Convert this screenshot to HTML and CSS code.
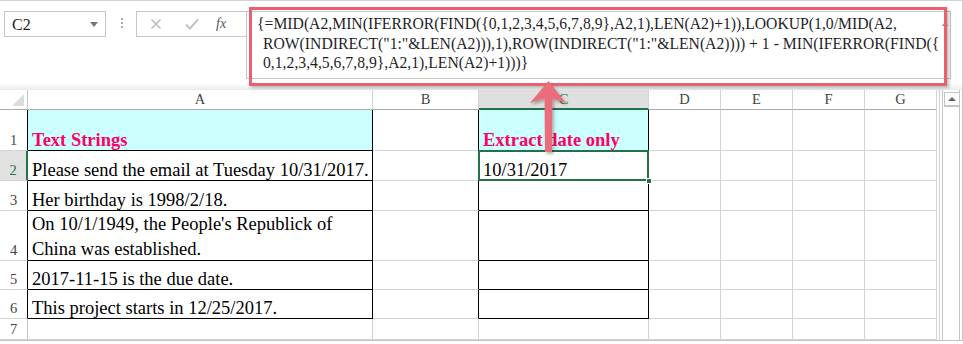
FILE: index.html
```html
<!DOCTYPE html>
<html lang="en">
<head>
    <meta charset="UTF-8">
    <meta name="viewport" content="width=device-width, initial-scale=1.0">
    <title>Extract date only</title>
    <link rel="stylesheet" href="styles.css">
</head>
<body>
<div class="app">
    <div class="topbar">
        <div class="namebox">
            <span class="name">C2</span>
            <span class="caret"></span>
        </div>
        <div class="grip">
            <span></span><span></span><span></span>
        </div>
        <div class="fxbox">
            <svg class="icon-x" width="12" height="12" viewBox="0 0 12 12">
                <path d="M1.5 1.5 L10.5 10.5 M10.5 1.5 L1.5 10.5" stroke="#bdbdbd" stroke-width="1.6" fill="none"/>
            </svg>
            <svg class="icon-check" width="14" height="12" viewBox="0 0 14 12">
                <path d="M1 6.5 L5 10.5 L13 1.5" stroke="#c2c2c2" stroke-width="2" fill="none"/>
            </svg>
            <span class="fx">fx</span>
        </div>
        <div class="formula">
            <div class="fline">{=MID(A2,MIN(IFERROR(FIND({0,1,2,3,4,5,6,7,8,9},A2,1),LEN(A2)+1)),LOOKUP(1,0/MID(A2,</div>
            <div class="fline cont">ROW(INDIRECT("1:"&amp;LEN(A2))),1),ROW(INDIRECT("1:"&amp;LEN(A2)))) + 1 - MIN(IFERROR(FIND({</div>
            <div class="fline cont">0,1,2,3,4,5,6,7,8,9},A2,1),LEN(A2)+1)))}</div>
            <span class="collapse"></span>
        </div>
    </div>

    <div class="sheet">
        <div class="grid">
            <!-- header row -->
            <div class="corner"><span></span></div>
            <div class="ch">A</div>
            <div class="ch">B</div>
            <div class="ch sel">C</div>
            <div class="ch">D</div>
            <div class="ch">E</div>
            <div class="ch">F</div>
            <div class="ch">G</div>

            <div class="rh edge">1</div>
            <div class="c a title">Text Strings</div>
            <div class="c b"></div>
            <div class="c cc title">Extract date only</div>
            <div class="c"></div><div class="c"></div><div class="c"></div><div class="c"></div>

            <div class="rh sel">2</div>
            <div class="c a">Please send the email at Tuesday 10/31/2017.</div>
            <div class="c b"></div>
            <div class="c cc active">10/31/2017<span class="handle"></span></div>
            <div class="c"></div><div class="c"></div><div class="c"></div><div class="c"></div>

            <div class="rh edge">3</div>
            <div class="c a">Her birthday is 1998/2/18.</div>
            <div class="c b"></div>
            <div class="c cc"></div>
            <div class="c"></div><div class="c"></div><div class="c"></div><div class="c"></div>

            <div class="rh edge">4</div>
            <div class="c a wrap"><span>On 10/1/1949, the People's Republick of<br>China was established.</span></div>
            <div class="c b"></div>
            <div class="c cc"></div>
            <div class="c"></div><div class="c"></div><div class="c"></div><div class="c"></div>

            <div class="rh edge">5</div>
            <div class="c a">2017-11-15 is the due date.</div>
            <div class="c b"></div>
            <div class="c cc"></div>
            <div class="c"></div><div class="c"></div><div class="c"></div><div class="c"></div>

            <div class="rh edge">6</div>
            <div class="c a">This project starts in 12/25/2017.</div>
            <div class="c b"></div>
            <div class="c cc"></div>
            <div class="c"></div><div class="c"></div><div class="c"></div><div class="c"></div>

            <div class="rh">7</div>
            <div class="c"></div><div class="c"></div><div class="c"></div>
            <div class="c"></div><div class="c"></div><div class="c"></div><div class="c"></div>
        </div>
        <div class="vscroll">
            <div class="vtrack">
                <div class="vbtn"><span></span></div>
            </div>
        </div>
    </div>

    <!-- callout drawn over the sheet -->
    <div class="highlight"></div>
    <svg class="arrow" width="48" height="82" viewBox="0 0 48 82">
        <defs>
            <filter id="shadow" x="-30%" y="-30%" width="160%" height="160%">
                <feDropShadow dx="1.5" dy="2" stdDeviation="1.5" flood-color="#000" flood-opacity="0.3"/>
            </filter>
        </defs>
        <path d="M23.5 3 L41 25 L27.5 20.5 L27 74 L20 74 L19.5 20.5 L5 25 Z" fill="#eb6c7a" filter="url(#shadow)"/>
    </svg>
</div>
</body>
</html>
```

FILE: styles.css
```css
* {
    box-sizing: border-box;
}

body {
    margin: 0;
    background: #e2e2e2;
    font-family: "Liberation Serif", "Times New Roman", serif;
}

.app {
    position: relative;
    width: 963px;
    height: 344px;
    background: #fff;
    border-top: 1px solid #d4d4d4;
}

.topbar {
    display: flex;
    align-items: flex-start;
    height: 89px;
    padding: 10px 11px 0 4px;
    background: linear-gradient(to bottom, #fff 82px, #ebebeb 89px);
    border-right: 1px solid #d0d0d0;
}

.namebox {
    display: flex;
    align-items: center;
    justify-content: space-between;
    width: 102px;
    height: 26px;
    padding: 0 7px 0 7px;
    border: 1px solid #c6c6c6;
    background: #fff;
}

.name {
    font-size: 16px;
    color: #222;
    line-height: 24px;
    padding-top: 1px;
}

.caret {
    width: 0;
    height: 0;
    border-left: 4px solid transparent;
    border-right: 4px solid transparent;
    border-top: 5px solid #777;
}

.grip {
    display: flex;
    flex-direction: column;
    gap: 2px;
    width: 30px;
    padding: 7px 0 0 15px;
}

.grip span {
    width: 2px;
    height: 2px;
    background: #a8a8a8;
}

.fxbox {
    display: flex;
    align-items: center;
    width: 110px;
    height: 26px;
    border: 1px solid #c6c6c6;
    border-right: none;
    background: #fff;
}

.icon-x {
    margin-left: 13px;
}

.icon-check {
    margin-left: 23px;
}

.fx {
    margin-left: 17px;
    font-size: 14px;
    font-style: italic;
    color: #555;
}

.formula {
    position: relative;
    flex: 1;
    height: 68px;
    padding: 2px 0 0 10px;
    border: 1px solid #c6c6c6;
    background: #fff;
    font-size: 15.7px;
    line-height: 19.5px;
    color: #1f1f2a;
    white-space: nowrap;
}

.fline.cont {
    padding-left: 6px;
}

.collapse {
    position: absolute;
    right: 2px;
    top: 10px;
    width: 0;
    height: 0;
    border-left: 3px solid transparent;
    border-right: 3px solid transparent;
    border-bottom: 4px solid #888;
}

.sheet {
    display: flex;
    height: 251px;
    border-bottom: 1px solid #c4c4c4;
}

.grid {
    display: grid;
    grid-template-columns: 28px 345px 106px 170px 72px 72px 72px 72px;
    grid-template-rows: 20px 41px 30px 30px 50px 29px 29px 21px;
    padding-right: 2px;
    border-right: 1px solid #d0d0d0;
    font-size: 18.5px;
    color: #000;
}

.corner {
    display: flex;
    justify-content: flex-end;
    align-items: flex-end;
    padding: 0 3px 3px 0;
    border-right: 1px solid #c8c8c8;
    border-bottom: 1px solid #ababab;
}

.corner span {
    width: 0;
    height: 0;
    border-left: 12px solid transparent;
    border-bottom: 12px solid #dcdcdc;
}

.ch {
    display: flex;
    justify-content: center;
    align-items: center;
    font-size: 14.5px;
    color: #444;
    border-right: 1px solid #d4d4d4;
    border-bottom: 1px solid #ababab;
}

.ch.sel {
    background: #dfdfdf;
    color: #217346;
    border-bottom: 2px solid #217346;
}

.rh {
    display: flex;
    justify-content: center;
    align-items: flex-end;
    padding-bottom: 1px;
    font-size: 14.5px;
    color: #444;
    border-right: 1px solid #c8c8c8;
    border-bottom: 1px solid #d4d4d4;
}

.rh.edge {
    border-right-color: #000;
}

.rh.sel {
    background: #e1e1e1;
    color: #217346;
    border-right: 2px solid #217346;
}

.c {
    position: relative;
    display: flex;
    align-items: flex-end;
    padding: 0 0 0 4px;
    line-height: 20px;
    white-space: nowrap;
    border-right: 1px solid #d4d4d4;
    border-bottom: 1px solid #d4d4d4;
}

.c.a,
.c.cc {
    border-right-color: #000;
    border-bottom-color: #000;
}

.c.b {
    border-right-color: #000;
}

.c.title {
    background: #ccffff;
    color: #ff0066;
    font-weight: bold;
}

.c.wrap {
    line-height: 25px;
}

.c.wrap span {
    margin-bottom: -2px;
}

.c.active::after {
    content: "";
    position: absolute;
    top: -1px;
    left: -1px;
    right: -1px;
    bottom: -1px;
    border: 2px solid #217346;
}

.handle {
    position: absolute;
    right: -4px;
    bottom: -4px;
    width: 6px;
    height: 6px;
    background: #217346;
    border: 1px solid #fff;
    z-index: 1;
}

.vscroll {
    width: 22px;
    margin-left: 2px;
    padding-right: 2px;
    border-right: 1px solid #c4c4c4;
}

.vtrack {
    height: 100%;
    border-left: 1px solid #c4c4c4;
    border-right: 1px solid #c4c4c4;
    padding: 2px 0 0 1px;
}

.vbtn {
    display: flex;
    justify-content: center;
    align-items: center;
    height: 15px;
    border-left: 1px solid #c4c4c4;
    border-top: 1px solid #c4c4c4;
    border-bottom: 2px solid #c4c4c4;
}

.vbtn span {
    width: 0;
    height: 0;
    border-left: 4px solid transparent;
    border-right: 4px solid transparent;
    border-bottom: 4px solid #666;
}

.highlight {
    position: absolute;
    left: 249px;
    top: 6px;
    width: 698px;
    height: 79px;
    border: 3px solid #e8616f;
    box-shadow: 2px 2px 3px rgba(0, 0, 0, 0.25);
}

.arrow {
    position: absolute;
    left: 525px;
    top: 77px;
}
```
